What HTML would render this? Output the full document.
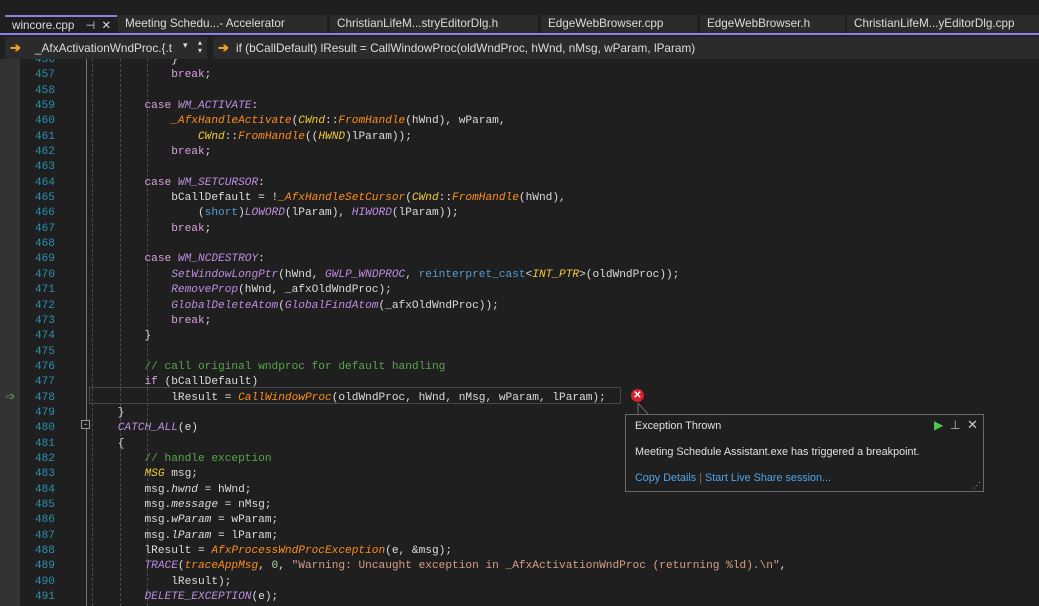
<!DOCTYPE html>
<html><head><meta charset="utf-8"><style>
*{margin:0;padding:0;box-sizing:border-box}
body{width:1039px;height:606px;background:#1f1f1f;overflow:hidden;position:relative;font-family:"Liberation Sans",sans-serif;color:#dcdcdc}
.tab{position:absolute;top:15px;height:18px;background:#2b2b2b;font-size:11.7px;color:#dcdcdc;padding:2px 0 0 7px;white-space:nowrap;overflow:hidden}
.tab.act{background:#1f1f1f;border-top:2px solid #8f7fe8;padding-top:1px}
.pl{position:absolute;left:0;top:33px;width:1039px;height:2px;background:#8f7fe8}
.combo{position:absolute;top:37px;height:22px;background:#2b2b2b;font-size:11.8px;padding:4px 0 0 23px;white-space:nowrap;overflow:hidden}
.arr{position:absolute;left:5px;top:3px;color:#f0a030;font-size:13px;font-weight:bold}
.margin{position:absolute;left:0;top:59px;width:20px;height:547px;background:#333}
.code{position:absolute;left:0;top:59px;width:1039px;height:547px;overflow:hidden}
.lines{position:absolute;left:0;top:-6px;width:1039px}
.ln{height:15.35px;line-height:15.35px;font-family:"Liberation Mono",monospace;font-size:11.15px;white-space:pre;position:relative}
.num{position:absolute;left:20px;width:35px;text-align:right;color:#2b91af}
.tx{position:absolute;left:91px}
.k{color:#d8a0df}.m{color:#be8ce0;font-style:italic}.f{color:#ff8c1a;font-style:italic}.t{color:#f0c93a;font-style:italic}
.b{color:#569cd6}.s{color:#d69d85}.c{color:#57a64a}.i{font-style:italic}.n{color:#b5cea8}
.g{position:absolute;top:59px;height:547px;border-left:1px dashed #4a4a4a}
.pop{position:absolute;left:625px;top:414px;width:359px;height:78px;background:#1f1f1f;border:1px solid #6a6a6a;font-size:10.8px}
</style></head><body>
<div class="tab act" style="left:5px;width:112px">wincore.cpp <span style="margin-left:8px;font-size:11px">⊣</span> <span style="margin-left:3px">✕</span></div>
<div class="tab" style="left:118px;width:209px">Meeting Schedu...- Accelerator</div>
<div class="tab" style="left:330px;width:208px">ChristianLifeM...stryEditorDlg.h</div>
<div class="tab" style="left:541px;width:156px">EdgeWebBrowser.cpp</div>
<div class="tab" style="left:700px;width:145px">EdgeWebBrowser.h</div>
<div class="tab" style="left:847px;width:192px">ChristianLifeM...yEditorDlg.cpp</div>
<div class="pl"></div>
<div class="combo" style="left:5px;width:202px;padding-left:30px"><span class="arr">➔</span>_AfxActivationWndProc.{.t<span style="position:absolute;left:176px;top:3px;font-size:9px;background:#2b2b2b;padding-left:2px">▾</span><span style="position:absolute;left:193px;top:2px;font-size:8px;line-height:8px">▴<br>▾</span></div>
<div class="combo" style="left:213px;width:826px"><span class="arr">➔</span>if (bCallDefault) lResult = CallWindowProc(oldWndProc, hWnd, nMsg, wParam, lParam)</div>
<div class="margin"></div>
<div style="position:absolute;left:86px;top:59px;width:1px;height:547px;background:#777"></div>
<div class="g" style="left:92px"></div><div class="g" style="left:120px"></div><div class="g" style="left:147px"></div>
<div style="position:absolute;left:89px;top:387px;width:532px;height:17px;border:1px solid #464646"></div>
<div style="position:absolute;left:6px;top:390px;color:#6ab04c;font-size:11px">➩</div>
<div style="position:absolute;left:81px;top:420px;width:9px;height:9px;border:1px solid #999;font-size:9px;line-height:6px;text-align:center;color:#ccc;background:#1f1f1f">-</div>
<div class="code"><div class="lines">
<div class="ln"><span class="num">456</span><span class="tx">            }</span></div>
<div class="ln"><span class="num">457</span><span class="tx">            <span class="k">break</span>;</span></div>
<div class="ln"><span class="num">458</span></div>
<div class="ln"><span class="num">459</span><span class="tx">        <span class="k">case</span> <span class="m">WM_ACTIVATE</span>:</span></div>
<div class="ln"><span class="num">460</span><span class="tx">            <span class="f">_AfxHandleActivate</span>(<span class="t">CWnd</span>::<span class="f">FromHandle</span>(hWnd), wParam,</span></div>
<div class="ln"><span class="num">461</span><span class="tx">                <span class="t">CWnd</span>::<span class="f">FromHandle</span>((<span class="t">HWND</span>)lParam));</span></div>
<div class="ln"><span class="num">462</span><span class="tx">            <span class="k">break</span>;</span></div>
<div class="ln"><span class="num">463</span></div>
<div class="ln"><span class="num">464</span><span class="tx">        <span class="k">case</span> <span class="m">WM_SETCURSOR</span>:</span></div>
<div class="ln"><span class="num">465</span><span class="tx">            bCallDefault = !<span class="f">_AfxHandleSetCursor</span>(<span class="t">CWnd</span>::<span class="f">FromHandle</span>(hWnd),</span></div>
<div class="ln"><span class="num">466</span><span class="tx">                (<span class="b">short</span>)<span class="m">LOWORD</span>(lParam), <span class="m">HIWORD</span>(lParam));</span></div>
<div class="ln"><span class="num">467</span><span class="tx">            <span class="k">break</span>;</span></div>
<div class="ln"><span class="num">468</span></div>
<div class="ln"><span class="num">469</span><span class="tx">        <span class="k">case</span> <span class="m">WM_NCDESTROY</span>:</span></div>
<div class="ln"><span class="num">470</span><span class="tx">            <span class="m">SetWindowLongPtr</span>(hWnd, <span class="m">GWLP_WNDPROC</span>, <span class="b">reinterpret_cast</span>&lt;<span class="t">INT_PTR</span>&gt;(oldWndProc));</span></div>
<div class="ln"><span class="num">471</span><span class="tx">            <span class="m">RemoveProp</span>(hWnd, _afxOldWndProc);</span></div>
<div class="ln"><span class="num">472</span><span class="tx">            <span class="m">GlobalDeleteAtom</span>(<span class="m">GlobalFindAtom</span>(_afxOldWndProc));</span></div>
<div class="ln"><span class="num">473</span><span class="tx">            <span class="k">break</span>;</span></div>
<div class="ln"><span class="num">474</span><span class="tx">        }</span></div>
<div class="ln"><span class="num">475</span></div>
<div class="ln"><span class="num">476</span><span class="tx">        <span class="c">// call original wndproc for default handling</span></span></div>
<div class="ln"><span class="num">477</span><span class="tx">        <span class="k">if</span> (bCallDefault)</span></div>
<div class="ln"><span class="num">478</span><span class="tx">            lResult = <span class="f">CallWindowProc</span>(oldWndProc, hWnd, nMsg, wParam, lParam);</span></div>
<div class="ln"><span class="num">479</span><span class="tx">    }</span></div>
<div class="ln"><span class="num">480</span><span class="tx">    <span class="m">CATCH_ALL</span>(e)</span></div>
<div class="ln"><span class="num">481</span><span class="tx">    {</span></div>
<div class="ln"><span class="num">482</span><span class="tx">        <span class="c">// handle exception</span></span></div>
<div class="ln"><span class="num">483</span><span class="tx">        <span class="t">MSG</span> msg;</span></div>
<div class="ln"><span class="num">484</span><span class="tx">        msg.<span class="i">hwnd</span> = hWnd;</span></div>
<div class="ln"><span class="num">485</span><span class="tx">        msg.<span class="i">message</span> = nMsg;</span></div>
<div class="ln"><span class="num">486</span><span class="tx">        msg.<span class="i">wParam</span> = wParam;</span></div>
<div class="ln"><span class="num">487</span><span class="tx">        msg.<span class="i">lParam</span> = lParam;</span></div>
<div class="ln"><span class="num">488</span><span class="tx">        lResult = <span class="f">AfxProcessWndProcException</span>(e, &amp;msg);</span></div>
<div class="ln"><span class="num">489</span><span class="tx">        <span class="m">TRACE</span>(<span class="f">traceAppMsg</span>, <span class="n">0</span>, <span class="s">"Warning: Uncaught exception in _AfxActivationWndProc (returning %ld).\n"</span>,</span></div>
<div class="ln"><span class="num">490</span><span class="tx">            lResult);</span></div>
<div class="ln"><span class="num">491</span><span class="tx">        <span class="m">DELETE_EXCEPTION</span>(e);</span></div>
<div class="ln"><span class="num">492</span><span class="tx">    }</span></div>
</div></div>
<div style="position:absolute;left:631px;top:389px;width:13px;height:13px;border-radius:50%;background:#d8202a;color:#fff;font-size:10px;line-height:13px;text-align:center;font-weight:bold">✕</div>
<svg style="position:absolute;left:637px;top:403px" width="20" height="12"><path d="M1 0 L1 11 M1 0 L11 11" stroke="#6a6a6a" fill="none"/></svg>
<div class="pop">
<div style="position:absolute;left:9px;top:5px;color:#e0e0e0">Exception Thrown</div>
<div style="position:absolute;left:308px;top:3px;color:#4ec94e;font-size:12px">▶</div>
<div style="position:absolute;left:324px;top:3px;color:#bbb;font-size:12px">⊥</div>
<div style="position:absolute;left:341px;top:2px;color:#ccc;font-size:13px">✕</div>
<div style="position:absolute;left:9px;top:31px;color:#e0e0e0">Meeting Schedule Assistant.exe has triggered a breakpoint.</div>
<div style="position:absolute;left:9px;top:57px;color:#4ea6ea">Copy Details <span style="color:#777">|</span> Start Live Share session...</div>
<div style="position:absolute;right:2px;bottom:1px;color:#aaa;font-size:8px">⋰</div>
</div>
</body></html>
